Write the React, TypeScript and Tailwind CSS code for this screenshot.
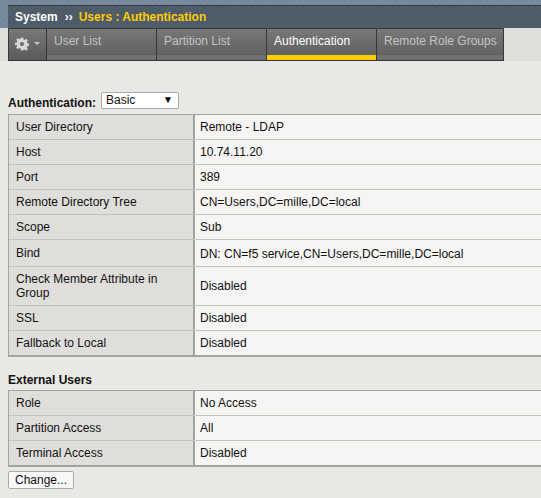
const font = "font-['Liberation_Sans',Arial,sans-serif]";

function Row({ label, value, h = "h-[25px]", last = false, valueClass = "" }: { label: string; value: string; h?: string; last?: boolean; valueClass?: string }) {
  return (
    <div className={`flex ${h} ${last ? "" : "border-b border-[#c4c3c0]"} box-border`}>
      <div className="w-[186px] shrink-0 box-border bg-[#dfdedb] border-r-2 border-[#a3a3a1] pl-[7px] pr-2 flex items-center leading-[14px]">{label}</div>
      <div className={`flex-1 bg-[#f6f5f4] pl-[5px] flex items-center whitespace-nowrap ${valueClass}`}>{value}</div>
    </div>
  );
}

function Tab({ label, w, active = false }: { label: string; w: string; active?: boolean }) {
  return (
    <div className={`${w} h-[33px] box-border shrink-0 border-r border-y border-[#33383d] bg-gradient-to-b from-[#787878] to-[#5d5d5d] flex flex-col`}>
      <div className={`flex-1 pl-[7px] pt-[5px] text-[12px] leading-[14px] ${active ? "text-white" : "text-[#c4c4c4]"}`}>{label}</div>
      <div className={`h-[5px] ${active ? "bg-[#ffcc00]" : "bg-[#707070]"}`} />
    </div>
  );
}

export default function App() {
  return (
    <div className={`${font} w-[541px] h-[498px] overflow-hidden bg-[#e9e8e4] text-[12px] text-[#111]`}>
      <div className="h-[28px] pt-[5px] pl-[8px] bg-[#72859a] bg-[repeating-linear-gradient(135deg,#73869a_0px,#73869a_2px,#788b9f_2px,#788b9f_4px)]">
        <div className="h-[23px] box-border border-t border-[#333b44] pl-[7px] flex items-center font-bold bg-[#4d5a67] bg-[repeating-linear-gradient(135deg,#4d5a67_0px,#4d5a67_2px,#505d6a_2px,#505d6a_4px)]">
          <span className="text-white">System</span>
          <span className="text-white text-[12px] ml-[7px]">››</span>
          <span className="text-[#ffcc00] ml-[6px]">Users : Authentication</span>
        </div>
      </div>
      <div className="h-[33px] pl-[8px] flex items-stretch bg-[#dfdedb]">
        <div className="w-[39px] h-[33px] box-border shrink-0 border border-[#33383d] bg-gradient-to-b from-[#787878] to-[#5a5a5a] flex items-center justify-center gap-[5px] pb-[2px]">
          <svg width="14" height="14" viewBox="0 0 24 24" fill="#d8d8d8">
            <path fillRule="evenodd" d="M10 1h4l.6 3.200 2 .8 2.700-1.800 2.800 2.800-1.800 2.700.8 2 3.200.6v4l-3.200.6-.8 2 1.800 2.700-2.800 2.800-2.700-1.800-2 .8L14 23h-4l-.6-3.200-2-.8-2.700 1.800-2.800-2.800 1.800-2.700-.8-2L0 14v-4l3.200-.6.8-2L2.200 4.700 5 1.900l2.700 1.800 2-.8zM12 8.500a3.500 3.500 0 100 7 3.500 3.500 0 000-7z" />
          </svg>
          <span className="w-0 h-0 border-x-[3.500px] border-x-transparent border-t-[3px] border-t-[#c9c9c9]" />
        </div>
        <Tab label="User List" w="w-[110px]" />
        <Tab label="Partition List" w="w-[110px]" />
        <Tab label="Authentication" w="w-[110px]" active />
        <Tab label="Remote Role Groups" w="w-[127px]" />
      </div>

      <div className="pl-[8px]">
        <div className="h-[53px] flex items-end pb-[5px] gap-[5px]">
          <span className="font-bold leading-[14px] text-[12px] mb-[-1px]">Authentication:</span>
          <div className="w-[78px] h-[17px] box-border border border-[#a9a9a9] bg-white rounded-[2px] pl-[4px] pb-[1px] flex items-center justify-between pr-[5px] leading-[14px]">
            <span>Basic</span>
            <span className="text-[10px] text-black">▼</span>
          </div>
        </div>
        <div className="border-t border-b-2 border-l border-[#a3a3a1]">
          <Row label="User Directory" value="Remote - LDAP" />
          <Row label="Host" value="10.74.11.20" />
          <Row label="Port" value="389" />
          <Row label="Remote Directory Tree" value="CN=Users,DC=mille,DC=local" />
          <Row label="Scope" value="Sub" />
          <Row label="Bind" value="DN: CN=f5 service,CN=Users,DC=mille,DC=local" h="h-[27px]" valueClass="pt-[2px]" />
          <Row label="Check Member Attribute in Group" value="Disabled" h="h-[39px]" />
          <Row label="SSL" value="Disabled" />
          <Row label="Fallback to Local" value="Disabled" h="h-[24px]" last />
        </div>
        <div className="h-[33px] flex items-end pb-[3px] font-bold leading-[14px]">External Users</div>
        <div className="border-t border-b-2 border-l border-[#a3a3a1]">
          <Row label="Role" value="No Access" />
          <Row label="Partition Access" value="All" />
          <Row label="Terminal Access" value="Disabled" h="h-[24px]" last />
        </div>
        <button className="block mt-[4px] w-[66px] h-[18px] box-border border border-[#a9a9a9] bg-[#f8f8f8] rounded-[2px] leading-[14px]">Change...</button>
      </div>
    </div>
  );
}
